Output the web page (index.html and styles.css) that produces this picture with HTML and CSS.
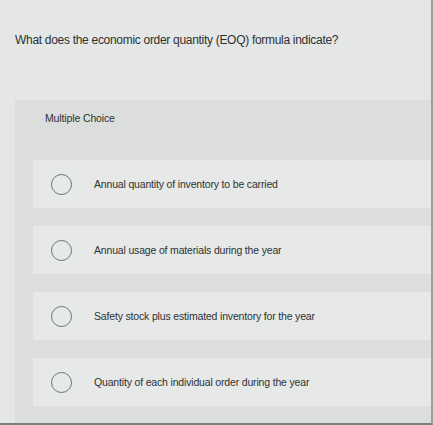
FILE: index.html
```html
<!DOCTYPE html>
<html lang="en">
<head>
    <meta charset="UTF-8">
    <meta name="viewport" content="width=device-width, initial-scale=1.0">
    <title>Question</title>
    <link rel="stylesheet" href="styles.css">
</head>
<body>
    <div class="page">
        <p class="question">What does the economic order quantity (EOQ) formula indicate?</p>

        <div class="panel">
            <div class="panel-label">Multiple Choice</div>

            <div class="choices">
                <label class="choice">
                    <span class="radio"></span>
                    <span class="choice-text">Annual quantity of inventory to be carried</span>
                </label>
                <label class="choice">
                    <span class="radio"></span>
                    <span class="choice-text">Annual usage of materials during the year</span>
                </label>
                <label class="choice">
                    <span class="radio"></span>
                    <span class="choice-text">Safety stock plus estimated inventory for the year</span>
                </label>
                <label class="choice">
                    <span class="radio"></span>
                    <span class="choice-text">Quantity of each individual order during the year</span>
                </label>
            </div>
        </div>
    </div>
</body>
</html>
```

FILE: styles.css
```css
body {
    margin: 0;
    padding: 0;
    background-color: #e4e7e5;
    font-family: 'Liberation Sans', Arial, sans-serif;
    color: #2e3134;
}
.page {
    height: 425px;
    box-sizing: border-box;
    border-right: 2px solid #9a9f9d;
    border-bottom: 2px solid #7c817f;
    overflow: hidden;
}
.question {
    margin: 0;
    padding: 31px 0 0 15px;
    height: 100px;
    box-sizing: border-box;
    font-size: 12px;
    line-height: 18px;
    letter-spacing: -0.3px;
}
.panel {
    margin-left: 15px;
    background-color: #dbdedc;
    padding-top: 11px;
    height: 400px;
}
.panel-label {
    padding-left: 30px;
    font-size: 10.5px;
    line-height: 15px;
    letter-spacing: -0.13px;
}
.choices {
    display: flex;
    flex-direction: column;
    gap: 18px;
    margin-top: 34px;
    padding-left: 18px;
}
.choice {
    display: flex;
    align-items: center;
    height: 48px;
    padding-left: 18px;
    background-color: #e6e9e7;
}
.radio {
    width: 19px;
    height: 19px;
    border: 1.5px solid #66727b;
    border-radius: 50%;
    flex-shrink: 0;
}
.choice-text {
    margin-left: 22px;
    font-size: 10.5px;
    letter-spacing: -0.17px;
}
```
